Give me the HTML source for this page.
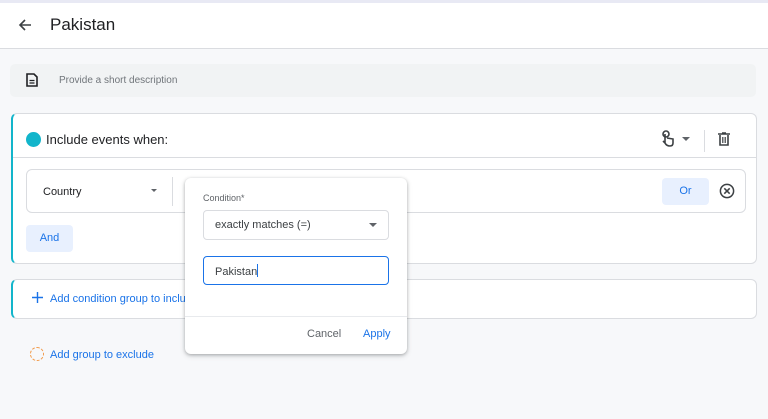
<!DOCTYPE html>
<html><head><style>
*{box-sizing:border-box;margin:0;padding:0}
body{width:768px;height:419px;overflow:hidden;background:#f7f8fa;font-family:"Liberation Sans",Arial,sans-serif;position:relative;color:#202124}
.abs{position:absolute}
</style></head><body>
<div class="abs" style="left:0;top:0;width:768px;height:3px;background:#e8e9f4"></div>
<div class="abs" style="left:0;top:3px;width:768px;height:46px;background:#fff;border-bottom:1px solid #dadce0"></div>
<svg class="abs" style="left:17px;top:17px" width="16" height="16" viewBox="0 0 16 16"><path d="M14 8H3M8 3L3 8l5 5" stroke="#3c4043" stroke-width="1.6" fill="none"/></svg>
<div class="abs" style="left:50px;top:15px;font-size:17px;color:#202124">Pakistan</div>

<div class="abs" style="left:10px;top:64px;width:746px;height:33px;background:#f1f3f4;border-radius:5px"></div>
<svg class="abs" style="left:26px;top:73px" width="12" height="14" viewBox="0 0 12 14"><path d="M1 1h7l3 3v9H1z" fill="none" stroke="#202124" stroke-width="1.6"/><path d="M3.5 7.5h5M3.5 10h5" stroke="#202124" stroke-width="1.3"/></svg>
<div class="abs" style="left:59px;top:75px;font-size:10px;color:#70757a">Provide a short description</div>

<div class="abs" style="left:11px;top:113px;width:746px;height:151px;background:#fff;border:1px solid #dadce0;border-left:2px solid #12b5cb;border-radius:6px"></div>
<div class="abs" style="left:13px;top:157px;width:743px;height:1px;background:#dadce0"></div>
<div class="abs" style="left:26px;top:132px;width:15px;height:15px;border-radius:50%;background:#12b5cb"></div>
<div class="abs" style="left:46px;top:132px;font-size:13px;color:#202124">Include events when:</div>
<svg class="abs" style="left:660px;top:130px" width="14" height="17" viewBox="0 0 14 17"><circle cx="6" cy="4" r="3" fill="none" stroke="#3c4043" stroke-width="1.6"/><path d="M5 4v9l-2-2M5 13c1 2 3 3 5 3s3-1 3-3V9l-6-1" fill="none" stroke="#3c4043" stroke-width="1.6"/></svg>
<svg class="abs" style="left:682px;top:137px" width="8" height="5"><path d="M0 0h8L4 4z" fill="#5f6368"/></svg>
<div class="abs" style="left:704px;top:130px;width:1px;height:22px;background:#dadce0"></div>
<svg class="abs" style="left:718px;top:132px" width="12" height="14" viewBox="0 0 12 14"><path d="M0 2h12M4 1h4" stroke="#3c4043" stroke-width="1.6"/><path d="M2 3v10h8V3" fill="none" stroke="#3c4043" stroke-width="1.6"/><path d="M4.8 5v6M7.2 5v6" stroke="#3c4043" stroke-width="1.2"/></svg>

<div class="abs" style="left:26px;top:169px;width:720px;height:44px;border:1px solid #dadce0;border-radius:6px;background:#fff"></div>
<div class="abs" style="left:43px;top:186px;font-size:11px;color:#202124">Country</div>
<svg class="abs" style="left:151px;top:189px" width="6" height="4"><path d="M0 0h6L3 3z" fill="#5f6368"/></svg>
<div class="abs" style="left:172px;top:177px;width:1px;height:29px;background:#dadce0"></div>
<div class="abs" style="left:662px;top:178px;width:47px;height:27px;background:#e8f0fe;border-radius:4px;color:#1a73e8;font-size:11px;text-align:center;line-height:27px">Or</div>
<svg class="abs" style="left:719px;top:183px" width="16" height="16" viewBox="0 0 16 16"><circle cx="8" cy="8" r="6.6" fill="none" stroke="#3c4043" stroke-width="1.5"/><path d="M5.3 5.3l5.4 5.4M10.7 5.3l-5.4 5.4" stroke="#3c4043" stroke-width="1.5"/></svg>
<div class="abs" style="left:26px;top:225px;width:47px;height:27px;background:#e8f0fe;border-radius:4px;color:#1a73e8;font-size:11px;text-align:center;line-height:27px">And</div>

<div class="abs" style="left:11px;top:279px;width:746px;height:40px;background:#fff;border:1px solid #dadce0;border-left:2px solid #12b5cb;border-radius:6px"></div>
<svg class="abs" style="left:32px;top:292px" width="11" height="11"><path d="M5.5 0v11M0 5.5h11" stroke="#1a73e8" stroke-width="1.4"/></svg>
<div class="abs" style="left:50px;top:293px;font-size:11px;color:#1a73e8">Add condition group to include</div>

<div class="abs" style="left:30px;top:347px;width:14px;height:14px;border-radius:50%;border:1.5px dashed #f29b4b"></div>
<div class="abs" style="left:50px;top:349px;font-size:11px;color:#1a73e8">Add group to exclude</div>

<div class="abs" style="left:185px;top:178px;width:222px;height:176px;background:#fff;border-radius:6px;box-shadow:0 1px 3px rgba(60,64,67,.35),0 2px 6px rgba(60,64,67,.15)"></div>
<div class="abs" style="left:203px;top:193px;font-size:9px;color:#5f6368">Condition*</div>
<div class="abs" style="left:203px;top:210px;width:186px;height:30px;border:1px solid #dadce0;border-radius:4px"></div>
<div class="abs" style="left:215px;top:219px;font-size:11px;color:#3c4043">exactly matches (=)</div>
<svg class="abs" style="left:369px;top:223px" width="8" height="5"><path d="M0 0h8L4 4z" fill="#5f6368"/></svg>
<div class="abs" style="left:203px;top:256px;width:186px;height:29px;border:1.5px solid #1a73e8;border-radius:4px"></div>
<div class="abs" style="left:215px;top:264px;font-size:11px;color:#3c4043">Pakistan<span style="display:inline-block;width:1px;height:13px;background:#1a73e8;vertical-align:-2px"></span></div>
<div class="abs" style="left:185px;top:316px;width:222px;height:1px;background:#e8eaed"></div>
<div class="abs" style="left:307px;top:328px;font-size:11px;color:#5f6368">Cancel</div>
<div class="abs" style="left:363px;top:328px;font-size:11px;color:#1a73e8">Apply</div>
</body></html>
